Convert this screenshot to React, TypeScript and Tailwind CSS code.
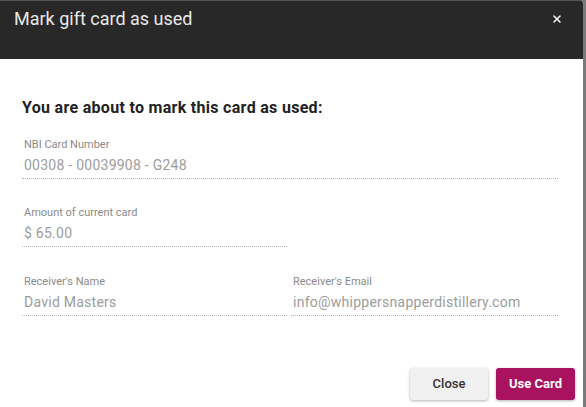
import { X } from 'lucide-react';

const font = { fontFamily: 'Roboto, "Liberation Sans", sans-serif' };

function Field({ label, value, className = '' }: { label: string; value: string; className?: string }) {
  return (
    <div className={className}>
      <div className="text-[11px] leading-[14px] text-[#8a8a8a] pl-[2px]">{label}</div>
      <div className="mt-[4px] text-[14px] leading-[18px] text-[#9c9c9c] pl-[2px] pb-[4px] border-b border-dotted border-[#b5b5b5] tracking-[0.25px]">
        {value}
      </div>
    </div>
  );
}

export default function App() {
  return (
    <div className="w-[586px] h-[407px] bg-[#7a7a7a] flex" style={font}>
      <div className="w-[583px] h-full bg-white rounded-tr-[4px] flex flex-col overflow-hidden">
        {/* Header */}
        <div className="h-[59px] bg-[#282828] flex items-start justify-between pl-[14px] pr-[20px] pt-[6px] border-t border-[#555]">
          <h2 className="text-[18px] leading-[24px] text-[#e8e8e8]">Mark gift card as used</h2>
          <X className="w-[12px] h-[12px] text-white mt-[6px]" strokeWidth={3} />
        </div>

        {/* Body */}
        <div className="flex-1 px-[22px] pt-[39px]">
          <h3 className="text-[16px] leading-[20px] font-bold text-[#222] tracking-[0.3px]">You are about to mark this card as used:</h3>

          <Field label="NBI Card Number" value="00308 - 00039908 - G248" className="mt-[20px] w-[536px]" />
          <Field label="Amount of current card" value="$ 65.00" className="mt-[27px] w-[265px]" />

          <div className="mt-[28px] flex gap-[4px] w-[536px]">
            <Field label="Receiver's Name" value="David Masters" className="w-[265px]" />
            <Field label="Receiver's Email" value="info@whippersnapperdistillery.com" className="w-[267px]" />
          </div>
        </div>

        {/* Footer */}
        <div className="flex justify-end gap-[8px] pr-[8px] pb-[7px]">
          <button className="w-[78px] h-[32px] rounded-[3px] bg-[#f0f0f0] text-[13px] font-medium text-[#333] shadow-[0_1px_3px_rgba(0,0,0,0.3)]">
            Close
          </button>
          <button className="w-[79px] h-[32px] rounded-[3px] bg-[#a8125f] text-[13px] font-bold text-white shadow-[0_1px_3px_rgba(0,0,0,0.3)]">
            Use Card
          </button>
        </div>
      </div>
    </div>
  );
}
